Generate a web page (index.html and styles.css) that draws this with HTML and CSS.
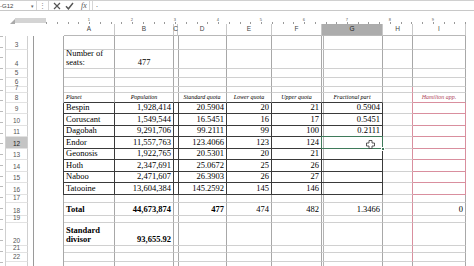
FILE: index.html
```html
<!DOCTYPE html>
<html><head><meta charset="utf-8"><link rel="stylesheet" href="styles.css"></head>
<body>
<div class="fbar">
  <div class="namebox"><span class="nb-text">-G12</span><span class="nb-arrow">▾</span></div>
  <div class="fb-dots">⋮</div>
  <div class="fb-icons">
    <svg width="8" height="8" viewBox="0 0 8 8"><path d="M1 1L7 7M7 1L1 7" stroke="#555" stroke-width="1.2" fill="none"/></svg>
    <svg width="9" height="8" viewBox="0 0 9 8"><path d="M1 4.2L3.4 6.8L8 1" fill="none" stroke="#555" stroke-width="1.4"/></svg>
    <span class="fx">fx</span>
  </div>
  <div class="fb-input">.</div>
</div>
<div class="ruler-row">
  <div class="corner"><svg width="5" height="5" viewBox="0 0 5 5"><path d="M5 0L5 5L0 5Z" fill="#aaa"/></svg></div>
  <div class="hruler">
    <div class="rmargin"></div>
    <div class="inch"><span>1</span></div><div class="inch"><span>2</span></div><div class="inch"><span>3</span></div>
    <div class="inch"><span>4</span></div><div class="inch"><span>5</span></div><div class="inch"><span>6</span></div>
    <div class="inch"><span>7</span></div><div class="inch"><span>8</span></div><div class="inch"><span>9</span></div>
    <div class="inch"></div>
  </div>
</div>
<div class="sheet">
  <div class="vruler"></div>
  <div class="grid">
    <!-- header -->
    <div class="rn hdr"></div><div class="gp"></div><div class="mgh"></div>
    <div class="ch">A</div><div class="ch">B</div><div class="ch">C</div><div class="ch">D</div><div class="ch">E</div><div class="ch">F</div><div class="ch sel-h">G</div><div class="ch">H</div><div class="ch">I</div><div class="rt"></div>
    <!-- 3 -->
    <div class="rn">3</div><div class="gp"></div><div class="mg"></div>
    <div class="c"></div><div class="c"></div><div class="c"></div><div class="c"></div><div class="c"></div><div class="c"></div><div class="c"></div><div class="c"></div><div class="c"></div><div class="rt"></div>
    <!-- 4 -->
    <div class="rn">4</div><div class="gp"></div><div class="mg"></div>
    <div class="c wrap">Number of seats:</div><div class="c m">477</div><div class="c"></div><div class="c"></div><div class="c"></div><div class="c"></div><div class="c"></div><div class="c"></div><div class="c"></div><div class="rt"></div>
    <!-- 5 -->
    <div class="rn">5</div><div class="gp"></div><div class="mg"></div>
    <div class="c"></div><div class="c"></div><div class="c"></div><div class="c"></div><div class="c"></div><div class="c"></div><div class="c"></div><div class="c"></div><div class="c"></div><div class="rt"></div>
    <!-- 6 -->
    <div class="rn">6</div><div class="gp"></div><div class="mg"></div>
    <div class="c"></div><div class="c"></div><div class="c"></div><div class="c"></div><div class="c"></div><div class="c"></div><div class="c"></div><div class="c"></div><div class="c"></div><div class="rt"></div>
    <!-- 7 -->
    <div class="rn">7</div><div class="gp"></div><div class="mg"></div>
    <div class="c"></div><div class="c"></div><div class="c"></div><div class="c"></div><div class="c"></div><div class="c"></div><div class="c"></div><div class="c pkr"></div><div class="c"></div><div class="rt"></div>
    <!-- 8 -->
    <div class="rn">8</div><div class="gp"></div><div class="mg"></div>
    <div class="c it bl">Planet</div><div class="c it m bl">Population</div><div class="c bl"></div><div class="c it m bl">Standard quota</div><div class="c it m bl">Lower quota</div><div class="c it m bl">Upper quota</div><div class="c it m bl">Fractional part</div><div class="c pkr"></div><div class="c it m red pkb">Hamilton app.</div><div class="rt"></div>
    <!-- 9 -->
    <div class="rn">9</div><div class="gp"></div><div class="mg mgb"></div>
    <div class="c bx">Bespin</div><div class="c n bx">1,928,414</div><div class="c bx"></div><div class="c n bx">20.5904</div><div class="c n bx">20</div><div class="c n bx">21</div><div class="c n bx">0.5904</div><div class="c pkr"></div><div class="c pk"></div><div class="rt"></div>
    <!-- 10 -->
    <div class="rn">10</div><div class="gp"></div><div class="mg mgb"></div>
    <div class="c bx">Coruscant</div><div class="c n bx">1,549,544</div><div class="c bx"></div><div class="c n bx">16.5451</div><div class="c n bx">16</div><div class="c n bx">17</div><div class="c n bx">0.5451</div><div class="c pkr"></div><div class="c pk"></div><div class="rt"></div>
    <!-- 11 -->
    <div class="rn">11</div><div class="gp"></div><div class="mg mgb"></div>
    <div class="c bx">Dagobah</div><div class="c n bx">9,291,706</div><div class="c bx"></div><div class="c n bx">99.2111</div><div class="c n bx">99</div><div class="c n bx">100</div><div class="c n bx">0.2111</div><div class="c pkr"></div><div class="c pk"></div><div class="rt"></div>
    <!-- 12 -->
    <div class="rn sel-r">12</div><div class="gp"></div><div class="mg mgb"></div>
    <div class="c bx">Endor</div><div class="c n bx">11,557,763</div><div class="c bx"></div><div class="c n bx">123.4066</div><div class="c n bx">123</div><div class="c n bx">124</div><div class="c n bx selcell"><span class="selbox"></span><span class="handle"></span><svg class="cursor" width="9" height="9" viewBox="0 0 9 9"><path d="M3 0.5H6V3H8.5V6H6V8.5H3V6H0.5V3H3Z" fill="#fff" stroke="#333" stroke-width="0.8"/></svg></div><div class="c pkr"></div><div class="c pk"></div><div class="rt"></div>
    <!-- 13 -->
    <div class="rn">13</div><div class="gp"></div><div class="mg mgb"></div>
    <div class="c bx">Geonosis</div><div class="c n bx">1,922,765</div><div class="c bx"></div><div class="c n bx">20.5301</div><div class="c n bx">20</div><div class="c n bx">21</div><div class="c n bx"></div><div class="c pkr"></div><div class="c pk"></div><div class="rt"></div>
    <!-- 14 -->
    <div class="rn">14</div><div class="gp"></div><div class="mg mgb"></div>
    <div class="c bx">Hoth</div><div class="c n bx">2,347,691</div><div class="c bx"></div><div class="c n bx">25.0672</div><div class="c n bx">25</div><div class="c n bx">26</div><div class="c n bx"></div><div class="c pkr"></div><div class="c pk"></div><div class="rt"></div>
    <!-- 15 -->
    <div class="rn">15</div><div class="gp"></div><div class="mg mgb"></div>
    <div class="c bx">Naboo</div><div class="c n bx">2,471,607</div><div class="c bx"></div><div class="c n bx">26.3903</div><div class="c n bx">26</div><div class="c n bx">27</div><div class="c n bx"></div><div class="c pkr"></div><div class="c pk"></div><div class="rt"></div>
    <!-- 16 -->
    <div class="rn">16</div><div class="gp"></div><div class="mg mgb"></div>
    <div class="c bx">Tatooine</div><div class="c n bx">13,604,384</div><div class="c bx"></div><div class="c n bx">145.2592</div><div class="c n bx">145</div><div class="c n bx">146</div><div class="c n bx"></div><div class="c pkr"></div><div class="c pk"></div><div class="rt"></div>
    <!-- 17 -->
    <div class="rn">17</div><div class="gp"></div><div class="mg"></div>
    <div class="c"></div><div class="c"></div><div class="c"></div><div class="c"></div><div class="c"></div><div class="c"></div><div class="c"></div><div class="c pkr"></div><div class="c"></div><div class="rt"></div>
    <!-- 18 -->
    <div class="rn">18</div><div class="gp"></div><div class="mg"></div>
    <div class="c bold">Total</div><div class="c n bold">44,673,874</div><div class="c"></div><div class="c n bold">477</div><div class="c n">474</div><div class="c n">482</div><div class="c n">1.3466</div><div class="c pkr"></div><div class="c n">0</div><div class="rt"></div>
    <!-- 19 -->
    <div class="rn">19</div><div class="gp"></div><div class="mg"></div>
    <div class="c"></div><div class="c"></div><div class="c"></div><div class="c"></div><div class="c"></div><div class="c"></div><div class="c"></div><div class="c pkr"></div><div class="c"></div><div class="rt"></div>
    <!-- 20 -->
    <div class="rn">20</div><div class="gp"></div><div class="mg"></div>
    <div class="c bold wrap">Standard divisor</div><div class="c n bold">93,655.92</div><div class="c"></div><div class="c"></div><div class="c"></div><div class="c"></div><div class="c"></div><div class="c pkr"></div><div class="c"></div><div class="rt"></div>
    <!-- 21 -->
    <div class="rn">21</div><div class="gp"></div><div class="mg"></div>
    <div class="c"></div><div class="c"></div><div class="c"></div><div class="c"></div><div class="c"></div><div class="c"></div><div class="c"></div><div class="c pkr"></div><div class="c"></div><div class="rt"></div>
    <!-- 22 -->
    <div class="rn">22</div><div class="gp"></div><div class="mg"></div>
    <div class="c"></div><div class="c"></div><div class="c"></div><div class="c"></div><div class="c"></div><div class="c"></div><div class="c"></div><div class="c pkr"></div><div class="c"></div><div class="rt"></div>
    <!-- 23 -->
    <div class="rn"></div><div class="gp"></div><div class="mg"></div>
    <div class="c"></div><div class="c"></div><div class="c"></div><div class="c"></div><div class="c"></div><div class="c"></div><div class="c"></div><div class="c"></div><div class="c"></div><div class="rt"></div>
  </div>
</div>
</body></html>
```
FILE: styles.css
```css
* { box-sizing: border-box; }
html, body { margin: 0; padding: 0; background: #fff; }
body { width: 474px; height: 266px; overflow: hidden; font-family: "Liberation Serif", serif; color: #000; }

/* formula bar */
.fbar { display: flex; height: 11px; border-top: 1px solid #d0d0d0; border-bottom: 1px solid #c8c8c8; font-family: "Liberation Sans", sans-serif; }
.namebox { width: 37px; display: flex; align-items: center; justify-content: space-between; padding: 0 2px 0 0; border-right: 1px solid #d6d6d6; }
.nb-text { font-size: 6px; color: #444; }
.nb-arrow { font-size: 5px; color: #666; }
.fb-dots { width: 11px; font-size: 7px; color: #888; display: flex; align-items: center; justify-content: center; }
.fb-icons { width: 42px; display: flex; align-items: center; gap: 4px; padding-left: 4px; border-left: 1px solid #d6d6d6; border-right: 1px solid #d6d6d6; }
.fx { font-family: "Liberation Serif", serif; font-style: italic; font-size: 8px; color: #555; margin-left: 3px; }
.fb-input { flex: 1; margin-left: 2px; border-left: 1px solid #d6d6d6; padding-left: 3px; font-size: 7px; line-height: 8px; color: #333; }

/* ruler */
.ruler-row { display: flex; height: 7px; margin-top: 6px; }
.corner { width: 33px; display: flex; align-items: flex-end; padding-left: 10px; }
.hruler { flex: 1; display: flex; height: 6px; margin-top: 1px; }
.rmargin { width: 31px; background: #d4d4d4; height: 5px; }
.inch { width: 43px; flex: none; display: flex; justify-content: flex-end; align-items: flex-start;
  background: repeating-linear-gradient(90deg, #9a9a9a 0 1px, transparent 1px 10.75px) left bottom / 100% 2px no-repeat; }
.inch span { font-family: "Liberation Sans", sans-serif; font-size: 4px; line-height: 4px; color: #555; margin-right: -1px; }

/* sheet */
.sheet { display: flex; }
.vruler { width: 6px; flex: none; border-right: 1px solid #d0d0d0; margin-top: 12px;
  background: repeating-linear-gradient(180deg, #bbb 0 1px, transparent 1px 10.75px) left top / 3px 100% no-repeat; }
.grid { display: grid;
  grid-template-columns: 22px 5px 31px 51px 59px 4px 49px 45px 50px 61px 30px 53px 8px;
  grid-template-rows: 12px 14px 19px 9px 9px 6px 10px 11px 12px 11px 12px 11px 12px 11px 12px 8px 13px 7px 23px 7px 9px 6px; }

.rn { font-family: "Liberation Sans", sans-serif; font-size: 6.5px; line-height: 7px; color: #555; display: flex; align-items: flex-end; justify-content: center; padding-bottom: 1px; border-bottom: 1px solid #e2e2e2; border-right: 1px solid #cfcfcf; }
.rn.hdr { border-bottom: none; border-right: none; }
.sel-r { background: #c4c4c4; color: #222; }
.mg { border-left: 1px solid #9a9a9a; border-right: 1px solid #a8a8a8; }
.mgb { border-right-color: #3a3a3a; }

.ch { font-family: "Liberation Sans", sans-serif; font-size: 6.5px; line-height: 7px; color: #444; display: flex; align-items: flex-end; justify-content: center; padding-bottom: 3px; border-bottom: 1px solid #b8b8b8; border-right: 1px solid #c8c8c8; }
.sel-h { background: #acacac; color: #222; }

.c { min-width: 0; overflow: hidden; white-space: nowrap; display: flex; align-items: flex-end; padding: 0 2px 1px 2px;
  font-size: 8.5px; line-height: 9px; border-right: 1px solid #a8a8a8; border-bottom: 1px solid #d0d0d0; }
.grid > .c:nth-child(13n+10) { background: linear-gradient(90deg, transparent 1px, #b4b4b4 1px 2px, transparent 2px) left top / 3px 100% no-repeat; }
.n { justify-content: flex-end; }
.m { justify-content: center; }
.it { font-style: italic; font-size: 6px; line-height: 7px; }
.bold { font-weight: bold; }
.wrap { white-space: normal; overflow: visible; }
.red { color: #b04a60; }
.bx { border-right-color: #3a3a3a; border-bottom-color: #3a3a3a; }
.bl { border-bottom-color: #3a3a3a; }
.pkr { border-right-color: #d98f9e; }
.pk { border-right-color: #d98f9e; border-bottom-color: #d98f9e; }
.pkb { border-bottom-color: #d98f9e; }

.selcell { position: relative; overflow: visible; }
.selbox { position: absolute; left: -1px; top: -1px; right: -1px; bottom: -1px; border: 1px solid #3f7a5a; }
.handle { position: absolute; right: -3px; bottom: -3px; width: 4px; height: 4px; background: #3f7a5a; border: 1px solid #fff; }
.cursor { position: absolute; left: 44px; top: 3px; }
```
